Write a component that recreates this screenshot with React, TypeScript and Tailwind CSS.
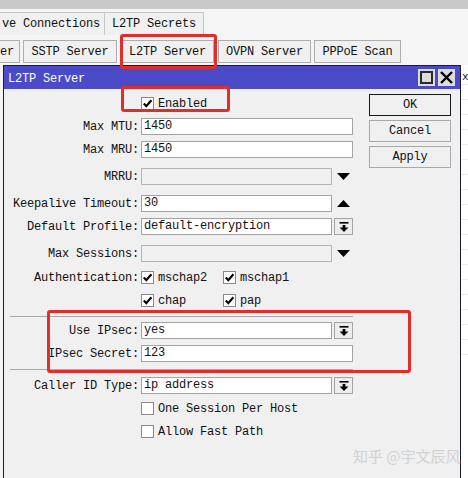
import React from 'react';

function Check({ checked = false }: { checked?: boolean }) {
	return (
		<div className="w-[13px] h-[13px] border border-[#8a8a8a] bg-white flex items-center justify-center shrink-0">
			{checked && (
				<svg width="11" height="11" viewBox="0 0 11 11">
					<path d="M1.8 5.6 L4.3 8.2 L9.4 2.2" stroke="#000" strokeWidth="2.2" fill="none" />
				</svg>
			)}
		</div>
	);
}

function Label({ text }: { text: string }) {
	return <span className="w-[135px] mr-[2px] text-right whitespace-nowrap shrink-0">{text}</span>;
}

function Input({ value = '', w = 'w-[212px]', disabled = false }: { value?: string; w?: string; disabled?: boolean }) {
	return (
		<div
			className={`${w} h-[17px] border pl-[2px] leading-[15px] whitespace-nowrap ${
				disabled ? 'bg-[#f0f0f0] border-[#b4b4b4]' : 'bg-white border-[#a3a3a3]'
			}`}
		>
			{value}
		</div>
	);
}

function DropButton() {
	return (
		<div className="ml-[2px] w-[19px] h-[17px] border border-[#a3a3a3] bg-[#ededed] flex items-center justify-center">
			<svg width="10" height="10" viewBox="0 0 10 10" fill="#000">
				<rect x="0.5" y="0" width="9" height="1.6" />
				<path d="M3.6 3h2.8v2.6h3l-4.4 4.4-4.4-4.4h3z" />
			</svg>
		</div>
	);
}

function Arrow({ up = false }: { up?: boolean }) {
	return (
		<div className="ml-[2px] w-[19px] h-[17px] flex items-center justify-center">
			<svg width="13" height="7" viewBox="0 0 13 7" fill="#000">
				{up ? <path d="M0 7H13L6.5 0Z" /> : <path d="M0 0H13L6.5 7Z" />}
			</svg>
		</div>
	);
}

function Row({ label, mt, children }: { label: string; mt: string; children: React.ReactNode }) {
	return (
		<div className={`flex items-center h-[17px] ${mt}`}>
			<Label text={label} />
			{children}
		</div>
	);
}

function CheckItem({ label, checked, w }: { label: string; checked?: boolean; w?: string }) {
	return (
		<div className={`flex items-center ${w ?? ''}`}>
			<Check checked={checked} />
			<span className="ml-[4px] whitespace-nowrap">{label}</span>
		</div>
	);
}

export default function App() {
	return (
		<div className="relative w-[468px] h-[478px] overflow-hidden bg-[#f5f5f5] text-[#111] text-[12px] font-['Courier_New','Nimbus_Mono_PS','FreeMono','Liberation_Mono',monospace] tracking-[-0.2px]">
			{/* window strip */}
			<div className="h-[9px] bg-[#c9c9c9]" />

			{/* tabs */}
			<div className="h-[26px] pt-[3px] flex">
				<div className="h-[23px] w-[105px] border-t border-r border-[#c6c6c6] bg-[#f0f0f0] flex items-center pl-[2px] whitespace-nowrap">
					ve Connections
				</div>
				<div className="h-[23px] w-[99px] border-t border-r border-[#c6c6c6] bg-[#f0f0f0] flex items-center justify-center whitespace-nowrap">
					L2TP Secrets
				</div>
			</div>

			{/* toolbar buttons */}
			<div className="h-[30px] pt-[5px] flex">
				<div className="h-[23px] w-[20px] border border-l-0 border-[#adadad] bg-[#f0f0f0] flex items-center">er</div>
				<div className="ml-[3px] h-[23px] w-[94px] border border-[#adadad] bg-[#f0f0f0] flex items-center justify-center whitespace-nowrap">
					SSTP Server
				</div>
				<div className="ml-[4px] h-[23px] w-[93px] border border-[#adadad] bg-[#f0f0f0] flex items-center justify-center whitespace-nowrap">
					L2TP Server
				</div>
				<div className="ml-[4px] h-[23px] w-[93px] border border-[#adadad] bg-[#f0f0f0] flex items-center justify-center whitespace-nowrap">
					OVPN Server
				</div>
				<div className="ml-[3px] h-[23px] w-[87px] border border-[#adadad] bg-[#f0f0f0] flex items-center justify-center whitespace-nowrap">
					PPPoE Scan
				</div>
			</div>

			<div className="flex h-[413px]">
				{/* dialog */}
				<div className="ml-[3px] w-[458px] border-l border-r border-t border-[#1c1c2c] bg-[#f0f0f0] flex flex-col">
					<div className="h-[23px] bg-[#4b4bca] flex items-center pl-[4px] pr-[5px] text-white">
						<span className="whitespace-nowrap pt-[2px]">L2TP Server</span>
						<div className="ml-auto flex gap-[3px]">
							<div className="w-[17px] h-[17px] bg-[#dcdcdc] flex items-center justify-center">
								<div className="w-[13px] h-[13px] border-2 border-[#2a2a2a]" />
							</div>
							<div className="w-[17px] h-[17px] bg-[#dcdcdc] flex items-center justify-center">
								<svg width="13" height="13" viewBox="0 0 13 13">
									<path d="M1 1L12 12M12 1L1 12" stroke="#000" strokeWidth="2.4" />
								</svg>
							</div>
						</div>
					</div>

					<div className="flex">
						{/* form */}
						<div className="w-[365px] flex flex-col">
							<div className="flex items-center h-[13px] mt-[8px]">
								<span className="w-[137px] shrink-0" />
								<CheckItem label="Enabled" checked />
							</div>
							<Row label="Max MTU:" mt="mt-[8px]">
								<Input value="1450" />
							</Row>
							<Row label="Max MRU:" mt="mt-[6px]">
								<Input value="1450" />
							</Row>
							<Row label="MRRU:" mt="mt-[10px]">
								<Input w="w-[191px]" disabled />
								<Arrow />
							</Row>
							<Row label="Keepalive Timeout:" mt="mt-[10px]">
								<Input value="30" w="w-[191px]" />
								<Arrow up />
							</Row>
							<Row label="Default Profile:" mt="mt-[6px]">
								<Input value="default-encryption" w="w-[191px]" />
								<DropButton />
							</Row>
							<Row label="Max Sessions:" mt="mt-[10px]">
								<Input w="w-[191px]" disabled />
								<Arrow />
							</Row>
							<Row label="Authentication:" mt="mt-[7px]">
								<CheckItem label="mschap2" checked w="w-[82px]" />
								<CheckItem label="mschap1" checked />
							</Row>
							<Row label="" mt="mt-[6px]">
								<CheckItem label="chap" checked w="w-[82px]" />
								<CheckItem label="pap" checked />
							</Row>
							<div className="mt-[7px] ml-[6px] w-[343px] h-px bg-[#a9a9a9]" />
							<Row label="Use IPsec:" mt="mt-[5px]">
								<Input value="yes" w="w-[191px]" />
								<DropButton />
							</Row>
							<Row label="IPsec Secret:" mt="mt-[6px]">
								<Input value="123" />
							</Row>
							<div className="mt-[7px] ml-[6px] w-[343px] h-px bg-[#a9a9a9]" />
							<Row label="Caller ID Type:" mt="mt-[7px]">
								<Input value="ip address" w="w-[191px]" />
								<DropButton />
							</Row>
							<Row label="" mt="mt-[6px]">
								<CheckItem label="One Session Per Host" />
							</Row>
							<Row label="" mt="mt-[6px]">
								<CheckItem label="Allow Fast Path" />
							</Row>
						</div>

						{/* buttons */}
						<div className="pt-[5px] flex flex-col gap-[4px]">
							<div className="w-[82px] h-[22px] border border-[#1a1a1a] bg-[#f0f0f0] flex items-center justify-center">OK</div>
							<div className="w-[82px] h-[22px] border border-[#a8a8a8] bg-[#f0f0f0] flex items-center justify-center">Cancel</div>
							<div className="w-[82px] h-[22px] border border-[#a8a8a8] bg-[#f0f0f0] flex items-center justify-center">Apply</div>
						</div>
					</div>
				</div>

				{/* list behind the dialog */}
				<div className="flex-1 bg-white flex flex-col overflow-hidden">
					<div className="h-[20px] border-b border-[#ececec] pt-[4px] pl-[1px] text-[11px]">x</div>
					{Array.from({ length: 18 }).map((_, i) => (
						<div key={i} className="h-[15px] border-b border-[#ececec] shrink-0" />
					))}
				</div>
			</div>

			{/* annotations */}
			<div className="absolute left-[120px] top-[34px] w-[97px] h-[35px] border-[3px] border-[#e02d2d] rounded-[3px]" />
			<div className="absolute left-[121px] top-[86px] w-[109px] h-[26px] border-[3px] border-[#e02d2d] rounded-[3px]" />
			<div className="absolute left-[47px] top-[310px] w-[364px] h-[63px] border-[3px] border-[#e02d2d] rounded-[3px]" />

			{/* watermark */}
			<div className="absolute left-[353px] top-[445px] text-[15px] tracking-normal text-[#d2d2d2] font-['Noto_Sans_CJK_SC',sans-serif] whitespace-nowrap">
				知乎 @宇文辰风
			</div>
		</div>
	);
}
